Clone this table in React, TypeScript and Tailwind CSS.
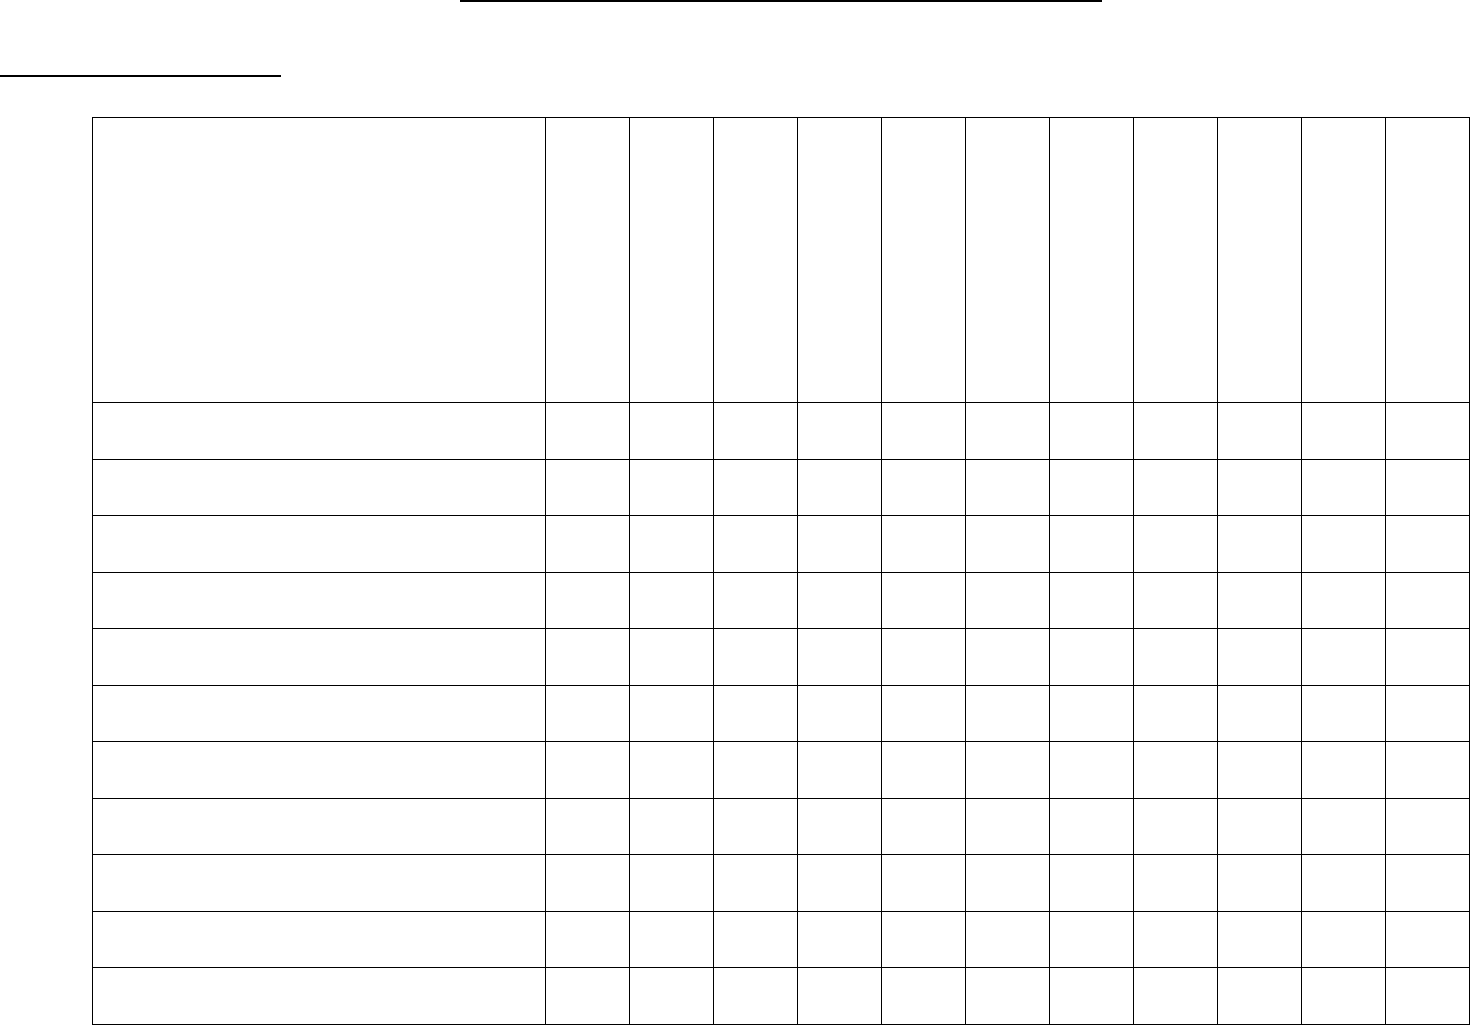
const COLS = 11;
const ROWS = 11;

export default function App() {
  return (
    <div className="min-h-[1025px] w-[1470px] bg-white font-['Liberation_Serif',serif] text-black">
      {/* title underline */}
      <div className="ml-[460px] h-[2px] w-[642px] bg-black" />

      {/* subtitle underline */}
      <div className="mt-[73px] h-[2px] w-[281px] bg-black" />

      <div className="ml-[92px] mt-[40px]">
        <table className="w-[1378px] table-fixed border-collapse">
          <colgroup>
            <col className="w-[453px]" />
            {Array.from({ length: COLS }).map((_, i) => (
              <col key={i} className="w-[84px]" />
            ))}
          </colgroup>
          <thead>
            <tr className="h-[285px]">
              <th className="border border-black p-0" />
              {Array.from({ length: COLS }).map((_, i) => (
                <th key={i} className="border border-black p-0" />
              ))}
            </tr>
          </thead>
          <tbody>
            {Array.from({ length: ROWS }).map((_, r) => (
              <tr key={r} className="h-[56.5px]">
                <td className="border border-black p-0" />
                {Array.from({ length: COLS }).map((_, c) => (
                  <td key={c} className="border border-black p-0" />
                ))}
              </tr>
            ))}
          </tbody>
        </table>
      </div>
    </div>
  );
}
